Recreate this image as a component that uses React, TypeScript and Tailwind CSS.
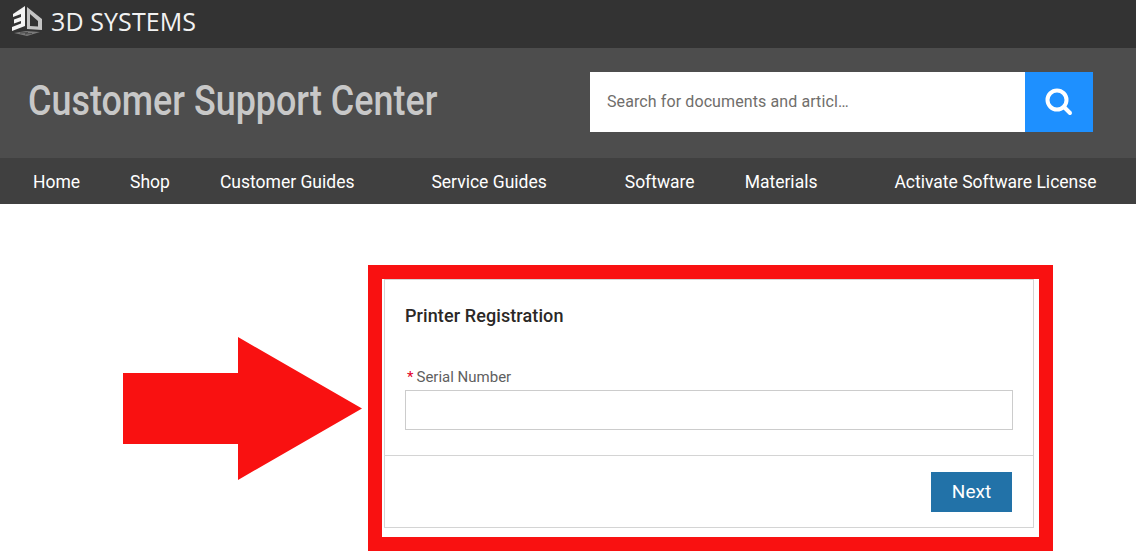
export default function App() {
  const nav: [string, string][] = [
    ["Home", "ml-[33px]"],
    ["Shop", "ml-[50px]"],
    ["Customer Guides", "ml-[50px]"],
    ["Service Guides", "ml-[77px]"],
    ["Software", "ml-[78px]"],
    ["Materials", "ml-[50px]"],
    ["Activate Software License", "ml-[77px]"],
  ];
  return (
    <div className="relative h-[560px] w-[1136px] overflow-hidden bg-white font-['Roboto',sans-serif]">
      <div className="flex h-12 items-center bg-[#333333] pb-[6px] pl-[11px]">
        <svg width="32" height="31" viewBox="0 0 32 31">
          <path d="M14 0 V20 L1 25 V21 L10 17.5 V15 L3 17.5 V13.5 L10 11 V8 L2 11 V8 Z" fill="#f4f4f4" />
          <path fillRule="evenodd" d="M16 1 L31 13 V24 L16 23 Z M19 8 V20 L27 20.5 V15 Z" fill="#c4c4c4" />
          <path d="M3 27 L15 25 L29 26 L16 30 Z" fill="#7a7a7a" />
          <path d="M9 27 L17 26.5 L14 28 L21 27.5" stroke="#4a4a4a" strokeWidth="1" fill="none" />
        </svg>
        <span className="ml-[8px] text-[25px] font-medium leading-none tracking-[0.1px] text-[#f2f2f2] font-['Open_Sans',sans-serif]">3D SYSTEMS</span>
      </div>
      <div className="flex h-[110px] items-center bg-[#4d4d4d] pb-[2px] pl-7">
        <div className="w-[562px] pb-[4px]">
          <h1 className="inline-block origin-left scale-x-[0.835] whitespace-nowrap text-[43px] font-medium leading-none text-[#c8c8c8]">Customer Support Center</h1>
        </div>
        <div className="flex h-[60px] w-[435px] items-center bg-white pl-[17px] text-base tracking-[0.1px] text-[#706e6b]">Search for documents and articl…</div>
        <div className="flex h-[60px] w-[68px] items-center justify-center bg-[#1e90ff]">
          <svg width="30" height="30" viewBox="0 0 30 30" fill="none" stroke="white" strokeLinecap="round">
            <circle cx="13" cy="13" r="9.5" strokeWidth="4" />
            <path d="M20.5 20.5 L26 26" strokeWidth="4" />
          </svg>
        </div>
      </div>
      <nav className="flex h-[46px] items-center bg-[#404040] pt-[2px] text-[17.5px] text-white">
        {nav.map(([label, margin]) => (
          <span key={label} className={margin}>{label}</span>
        ))}
      </nav>
      <div className="ml-[368px] mt-[61px] h-[286px] w-[685px] border-[14px] border-[#f91111] bg-white pb-[9px] pl-[2px] pr-[5px]">
        <div className="flex h-full flex-col border border-[#d4d4d4]">
          <div className="px-5 pt-[24px] text-lg font-medium leading-6 tracking-[0.1px] text-[#2b2826]">Printer Registration</div>
          <div className="px-5 pt-[39px] text-[15px] leading-5 text-[#5f5f5f]">
            <span className="ml-[2px] mr-[3px] text-[#e3002b]">*</span>Serial Number
          </div>
          <div className="mx-5 mt-[3px] h-10 border border-[#cccccc]" />
          <div className="mt-[25px] flex flex-1 items-start justify-end border-t border-[#d4d4d4] pr-[21px] pt-4">
            <button className="h-10 w-[81px] bg-[#2272a8] text-[19px] text-white">Next</button>
          </div>
        </div>
      </div>
      <svg className="absolute left-[123px] top-[337px]" width="240" height="144" viewBox="0 0 240 144">
        <path d="M0 36 H115 V0 L239 71.5 L115 143 V107 H0 Z" fill="#f91111" />
      </svg>
    </div>
  );
}
